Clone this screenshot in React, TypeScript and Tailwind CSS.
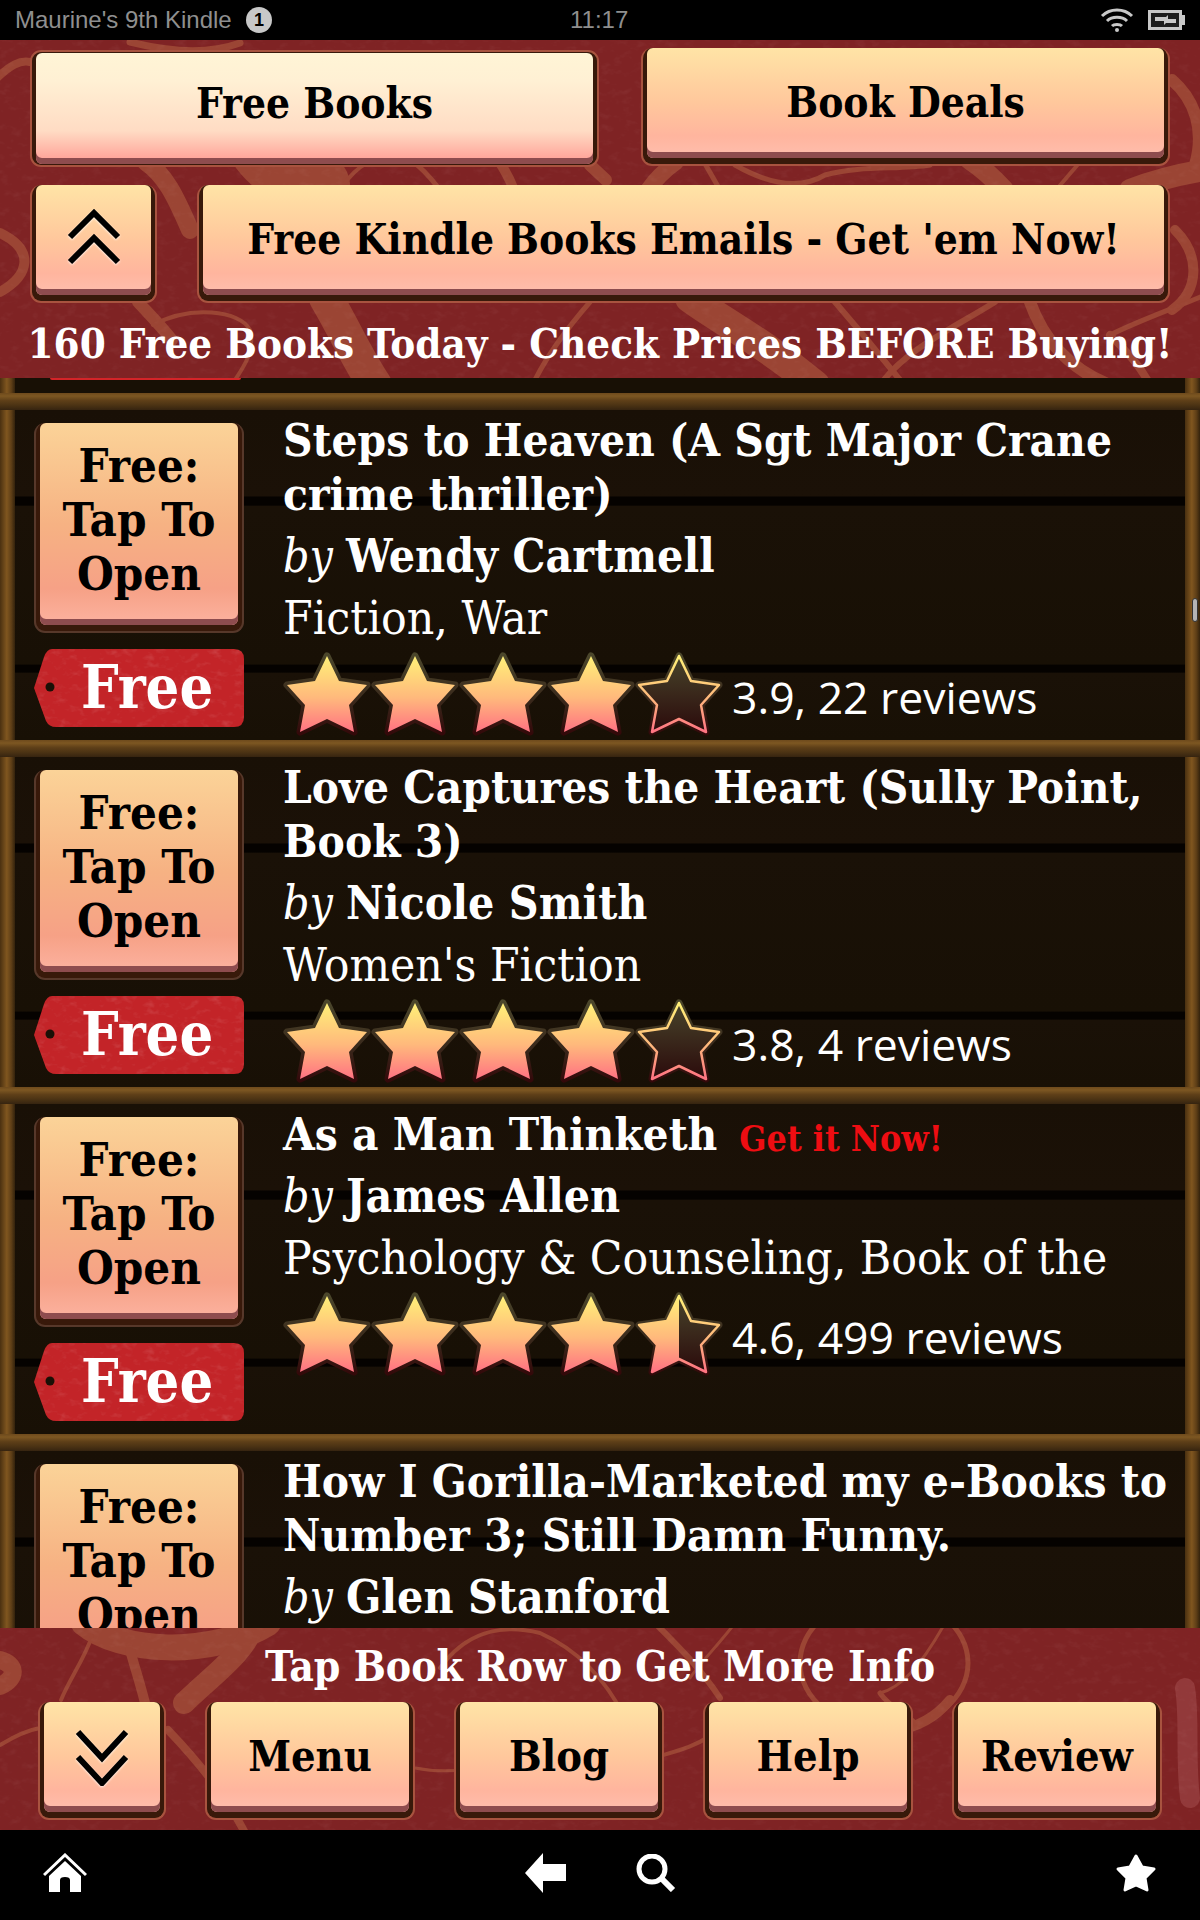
import type { ReactNode } from "react";

type Book = {
  title: string[];
  hot?: boolean;
  author: string;
  genre?: string;
  stars?: number[];
  rating?: string;
};

const books: Book[] = [
  { title: ["Steps to Heaven (A Sgt Major Crane", "crime thriller)"], author: "Wendy Cartmell", genre: "Fiction, War", stars: [1, 1, 1, 1, 0], rating: "3.9, 22 reviews" },
  { title: ["Love Captures the Heart (Sully Point,", "Book 3)"], author: "Nicole Smith", genre: "Women's Fiction", stars: [1, 1, 1, 1, 0], rating: "3.8, 4 reviews" },
  { title: ["As a Man Thinketh"], hot: true, author: "James Allen", genre: "Psychology & Counseling, Book of the", stars: [1, 1, 1, 1, 0.5], rating: "4.6, 499 reviews" },
  { title: ["How I Gorilla-Marketed my e-Books to", "Number 3; Still Damn Funny."], author: "Glen Stanford" },
];

const STAR = "44,4 56,29 84,33 66,53 71,80 44,67 17,80 22,53 4,33 32,29";

const Defs = () => (
  <svg width="0" height="0" className="absolute">
    <defs>
      <linearGradient id="starFill" gradientUnits="userSpaceOnUse" x1="0" y1="6" x2="0" y2="78">
        <stop offset="0" stopColor="#ffee78" />
        <stop offset="0.55" stopColor="#ffb97c" />
        <stop offset="1" stopColor="#ff7682" />
      </linearGradient>
      <linearGradient id="starEdge" gradientUnits="userSpaceOnUse" x1="0" y1="0" x2="0" y2="84">
        <stop offset="0" stopColor="#4c482c" />
        <stop offset="0.55" stopColor="#3a2a1c" />
        <stop offset="1" stopColor="#330709" />
      </linearGradient>
      <linearGradient id="starEmpty" gradientUnits="userSpaceOnUse" x1="0" y1="6" x2="0" y2="78">
        <stop offset="0" stopColor="#47432a" />
        <stop offset="1" stopColor="#2c0c0c" />
      </linearGradient>
      <clipPath id="starLeft">
        <rect x="0" y="0" width="44" height="83" />
      </clipPath>
      <filter id="grain" x="0" y="0" width="100%" height="100%">
        <feTurbulence type="fractalNoise" baseFrequency="0.09 0.14" numOctaves="3" seed="7" />
        <feColorMatrix values="0 0 0 0 1  0 0 0 0 0.8  0 0 0 0 0.8  1.6 0 0 0 -0.82" />
      </filter>
    </defs>
  </svg>
);

const Star = ({ value }: { value: number }) => (
  <svg width="88" height="84" viewBox="0 0 88 84" className="shrink-0">
    <polygon points={STAR} fill="url(#starEdge)" stroke="url(#starEdge)" strokeWidth="7" strokeLinejoin="round" />
    {value === 1 ? (
      <polygon points={STAR} fill="url(#starFill)" />
    ) : (
      <>
        <polygon points={STAR} fill="url(#starEmpty)" stroke="url(#starFill)" strokeWidth="2.5" strokeLinejoin="round" />
        {value > 0 && <polygon points={STAR} fill="url(#starFill)" clipPath="url(#starLeft)" />}
      </>
    )}
  </svg>
);

// header swirl coords are page y minus 40
const Swirls = ({ variant }: { variant: "top" | "bottom" }) => (
  <svg className="absolute inset-0 h-full w-full" fill="none" stroke="#9b4534" strokeLinecap="round">
    {variant === "top" ? (
      <>
        <path d="M-5 40C10 25 20 20 30 22" strokeWidth="8" />
        <path d="M0 193C35 210 30 235 0 252" strokeWidth="10" />
        <path d="M146 122C165 135 175 155 190 190" strokeWidth="18" />
        <path d="M260 110C275 130 290 135 320 145" strokeWidth="60" />
        <path d="M344 145C350 135 358 128 368 122" strokeWidth="4" />
        <path d="M413 122C425 130 432 140 440 150" strokeWidth="5" />
        <path d="M498 120C505 130 510 140 514 150" strokeWidth="10" />
        <path d="M590 125L606 140" strokeWidth="12" />
        <path d="M676 122C665 130 655 140 648 150" strokeWidth="16" />
        <path d="M704 122L720 150" strokeWidth="5" />
        <path d="M735 125C770 145 800 150 825 135C860 125 900 130 930 125" strokeWidth="5" />
        <path d="M970 120C985 130 995 140 1004 150" strokeWidth="20" />
        <path d="M1080 122L1056 150" strokeWidth="4" />
        <path d="M1205 130C1175 135 1150 142 1130 150" strokeWidth="22" />
        <path d="M1175 190C1200 215 1200 250 1172 270" strokeWidth="10" />
        <path d="M1172 40C1195 60 1205 90 1195 125" strokeWidth="12" />
        <path d="M138 262C150 275 160 285 172 300" strokeWidth="12" />
        <path d="M153 285C190 265 240 270 250 290C255 310 245 325 235 340" strokeWidth="4" />
        <path d="M326 258C345 290 355 315 375 345" strokeWidth="34" />
        <path d="M590 262C570 285 550 310 535 340" strokeWidth="5" />
        <path d="M690 258C720 280 760 300 815 345" strokeWidth="30" />
        <path d="M835 262C855 285 880 315 900 340" strokeWidth="6" />
        <path d="M995 262C950 290 905 310 880 345" strokeWidth="6" />
        <path d="M1030 262C1040 290 1060 325 1110 345" strokeWidth="12" />
        <path d="M1110 295C1125 310 1140 325 1150 345" strokeWidth="8" />
        <path d="M1110 295C1140 280 1170 270 1205 255" strokeWidth="5" />
        <path d="M130 2C170 12 210 14 240 3" strokeWidth="7" />
      </>
    ) : (
      <>
        <path d="M84 -5C120 25 210 30 268 -5" strokeWidth="26" />
        <path d="M255 -5C245 25 215 45 184 75" strokeWidth="22" />
        <path d="M92 8C85 30 70 50 61 72" strokeWidth="4" />
        <path d="M0 32C16 36 18 50 0 58" strokeWidth="18" />
        <path d="M130 22C135 40 140 55 145 75" strokeWidth="10" />
        <path d="M0 117C15 108 28 102 40 100" strokeWidth="4" />
        <path d="M168 102C190 125 225 165 245 205" strokeWidth="8" />
        <path d="M415 140C440 145 470 142 490 138" strokeWidth="3" />
        <path d="M440 40C465 5 500 -5 540 5C585 25 610 60 625 90" strokeWidth="4" />
        <path d="M660 128C680 122 695 118 710 108" strokeWidth="4" />
        <path d="M655 -5C680 20 700 40 720 70" strokeWidth="6" />
        <path d="M735 -5C720 15 700 35 690 50" strokeWidth="3" />
        <ellipse cx="884" cy="35" rx="84" ry="66" strokeWidth="5" />
        <path d="M840 85C870 112 920 108 950 72" strokeWidth="10" />
        <path d="M880 65C900 60 920 40 945 -5" strokeWidth="3" />
        <path d="M880 65C890 80 905 85 915 95" strokeWidth="5" />
        <path d="M1185 60C1190 90 1185 130 1190 170" stroke="#a5504f" strokeWidth="20" opacity="0.5" />
      </>
    )}
    <rect x="0" y="0" width="100%" height="100%" stroke="none" filter="url(#grain)" opacity="0.08" />
  </svg>
);

type BtnProps = {
  children: ReactNode;
  size: string;
  pressed?: boolean;
  row?: boolean;
};

const Btn = ({ children, size, pressed, row }: BtnProps) => (
  <div
    className={`flex shrink-0 flex-col rounded-[11px] border-2 bg-[#38190a] px-[4px] ${size} ${
      pressed ? "border-[#a5573a] pt-[1px] pb-[1px]" : "border-t-0 pb-[6px]"
    } ${row ? "border-[#57382a]" : "border-[#a8533f]"}`}
  >
    <div
      className={`flex flex-1 items-center justify-center rounded-[6px] text-center font-bold text-black shadow-[inset_0_-6px_0_#8e4c4e] ${
        pressed
          ? "pb-[11px] bg-[linear-gradient(#fff5d6,#fff0d4_25%,#ffdcc4_70%,#ff9f96_98%)]"
          : row
            ? "pb-[9px] bg-[linear-gradient(#fbd398,#f6b283_50%,#f6a186_82%,#fcb2a0)]"
            : "pb-[2px] bg-[linear-gradient(#ffe4a6,#ffc79c_50%,#ffb59e_80%,#ffbeae)]"
      }`}
    >
      {children}
    </div>
  </div>
);

const Chevrons = ({ down }: { down?: boolean }) => (
  <svg width="58" height="60" viewBox="0 0 58 60" fill="none" stroke="#000" strokeWidth="6" className="drop-shadow-[0_1px_1px_rgba(255,255,255,0.8)]">
    {down ? (
      <path d="M5 6L29 32L53 6M5 31L29 57L53 31" />
    ) : (
      <path d="M5 28L29 4L53 28M5 53L29 29L53 53" />
    )}
  </svg>
);

const Post = () => (
  <div className="w-[15px] shrink-0 bg-[linear-gradient(90deg,#4a3010,#80561f_45%,#5f3f17_75%,#33220c)]" />
);

const Shelf = () => (
  <div className="h-[17px] bg-[linear-gradient(#6e4a1c,#7d5722_18%,#5e3f18_45%,#4d3414_70%,#362410)]" />
);

const Tag = () => (
  <div className="relative mt-[16px] flex h-[78px] w-[210px] items-center pb-[2px] pl-[47px]">
    <svg className="absolute inset-0" width="210" height="78" viewBox="0 0 210 78">
      <defs>
        <clipPath id="tagShape">
          <path d="M18 0H200Q210 0 210 10V68Q210 78 200 78H22Q15 78 12 72L0 39L10 8Q13 0 18 0Z" />
        </clipPath>
      </defs>
      <g clipPath="url(#tagShape)">
        <rect width="210" height="78" fill="#c32428" />
        <rect width="210" height="78" filter="url(#grain)" opacity="0.2" />
      </g>
      <circle cx="16" cy="38" r="4.5" fill="#1a1006" />
    </svg>
    <span className="relative text-[59px] leading-none font-bold text-white">Free</span>
  </div>
);

const BookRow = ({ book }: { book: Book }) => (
  <div className="flex h-[330px] overflow-hidden">
    <Post />
    <div className="flex flex-1 bg-[linear-gradient(#191006,#1b1107_26%,#050200_26.4%,#050200_28.8%,#1a1107_29.2%,#181005_77%,#050200_77.3%,#050200_79.4%,#1a1107_79.8%,#181005)]">
      <div className="ml-[19px] w-[210px] shrink-0 pt-[13px]">
        <Btn row size="h-[210px] w-[210px] text-[47px] leading-[54px]">
          <span>
            Free:
            <br />
            Tap To
            <br />
            Open
          </span>
        </Btn>
        <Tag />
      </div>
      <div className="ml-[39px] min-w-0 flex-1 pt-[3px] whitespace-nowrap text-white">
        {book.title.map((line) => (
          <div key={line} className="text-[45.5px] leading-[54px] font-bold">
            {line}
            {book.hot && <span className="ml-[22px] align-[-1px] text-[35.5px] leading-none text-[#ee0d12]">Get it Now!</span>}
          </div>
        ))}
        <div className="mt-[4px] text-[46px] leading-[62px]">
          <span className="italic">by</span> <span className="font-bold">{book.author}</span>
        </div>
        {book.genre && <div className="text-[47.5px] leading-[62px]">{book.genre}</div>}
        {book.stars && (
          <div className="mt-[3px] flex items-center">
            <div className="flex">
              {book.stars.map((s, i) => (
                <Star key={i} value={s} />
              ))}
            </div>
            <span className="ml-[9px] pt-[5px] font-['Open_Sans',sans-serif] text-[44.5px] leading-[60px] [font-stretch:100%]">{book.rating}</span>
          </div>
        )}
      </div>
    </div>
    <Post />
  </div>
);

const Wifi = () => (
  <svg width="34" height="24" viewBox="0 0 34 24" fill="none" stroke="#c8c8c8" strokeWidth="3">
    <path d="M2 8C10 0 24 0 32 8M7 13C12 8 22 8 27 13M12 18C14 16 20 16 22 18" />
    <circle cx="17" cy="22" r="2" fill="#c8c8c8" stroke="none" />
  </svg>
);

const Battery = () => (
  <svg width="38" height="20" viewBox="0 0 38 20">
    <rect x="1.5" y="1.5" width="31" height="17" fill="#1d1d1d" stroke="#c8c8c8" strokeWidth="3" />
    <rect x="34" y="5" width="3" height="10" fill="#c8c8c8" />
    <path d="M7 7H18L20 5V9H28V13H18L16 15V11H7Z" fill="#c8c8c8" />
  </svg>
);

const NavIcons = () => (
  <div className="flex h-[90px] items-center bg-black pb-[4px]">
    <svg width="44" height="40" viewBox="0 0 44 40" className="ml-[43px]">
      <path d="M1 22L22 2L43 22" fill="none" stroke="#fff" strokeWidth="3" />
      <path d="M6 39V23L22 8L38 23V39H27V27Q27 24 22 24Q17 24 17 27V39Z" fill="#fff" />
    </svg>
    <svg width="42" height="40" viewBox="0 0 42 40" className="ml-[438px]">
      <path d="M0 20L18 0V11H41V28H18V40Z" fill="#fff" />
    </svg>
    <svg width="40" height="38" viewBox="0 0 40 38" fill="none" stroke="#fff" className="ml-[69px]">
      <circle cx="16" cy="15" r="13" strokeWidth="5" />
      <path d="M26 25L37 36" strokeWidth="6" />
    </svg>
    <svg width="42" height="40" viewBox="0 0 42 40" className="ml-[439px]">
      <polygon points="21,3 27,14 39,16 30,25 32,37 21,32 10,37 12,25 3,16 15,14" fill="#fff" stroke="#fff" strokeWidth="3" strokeLinejoin="round" />
    </svg>
  </div>
);

export default function App() {
  return (
    <div className="relative flex h-[1920px] w-[1200px] flex-col overflow-hidden bg-black font-['DejaVu_Serif',serif] font-stretch-condensed">
      <Defs />
      <div className="flex h-[40px] shrink-0 items-center bg-black font-['Liberation_Sans',sans-serif] text-[24px] text-[#8f8f8f] [font-stretch:100%]">
        <span className="ml-[15px] w-[217px] whitespace-nowrap">Maurine's 9th Kindle</span>
        <span className="ml-[14px] flex h-[26px] w-[26px] items-center justify-center rounded-full bg-[#c8c8c8] text-[18px] font-bold text-black">1</span>
        <span className="ml-[298px] w-[60px]">11:17</span>
        <div className="ml-[470px] flex items-center gap-[14px]">
          <Wifi />
          <Battery />
        </div>
      </div>

      <div className="relative z-10 h-[338px] shrink-0 overflow-hidden bg-[#7f2324] pt-[8px] pl-[30px]">
        <Swirls variant="top" />
        <div className="relative flex gap-[42px] text-[42px]">
          <div className="pt-[2px]">
            <Btn pressed size="h-[117px] w-[569px]">Free Books</Btn>
          </div>
          <Btn size="h-[118px] w-[529px]">Book Deals</Btn>
        </div>
        <div className="relative mt-[18px] flex gap-[40px] text-[42px]">
          <Btn size="h-[118px] w-[127px]">
            <Chevrons />
          </Btn>
          <Btn size="h-[118px] w-[973px]">Free Kindle Books Emails - Get 'em Now!</Btn>
        </div>
        <div className="relative mt-[14px] -ml-[30px] text-center text-[41.7px] leading-[54px] font-bold whitespace-nowrap text-white">
          160 Free Books Today - Check Prices BEFORE Buying!
        </div>
      </div>

      <div className="h-[1250px] shrink-0 overflow-hidden">
        <div className="flex h-[15px]">
          <Post />
          <div className="flex-1 bg-[#181005]">
            <div className="ml-[35px] h-[2px] w-[191px] rounded-b bg-[#d42428]" />
          </div>
          <Post />
        </div>
        {books.map((b) => (
          <div key={b.author}>
            <Shelf />
            <BookRow book={b} />
          </div>
        ))}
      </div>

      <div className="relative h-[202px] shrink-0 overflow-hidden bg-[#7f2324]">
        <Swirls variant="bottom" />
        <div className="relative h-[74px] text-center text-[42.3px] leading-[76px] font-bold text-white">Tap Book Row to Get More Info</div>
        <div className="relative flex gap-[39px] pl-[38px] text-[43px]">
          <Btn size="h-[118px] w-[128px]">
            <Chevrons down />
          </Btn>
          <Btn size="h-[118px] w-[210px]">Menu</Btn>
          <Btn size="h-[118px] w-[210px]">Blog</Btn>
          <Btn size="h-[118px] w-[210px]">Help</Btn>
          <Btn size="h-[118px] w-[210px]">Review</Btn>
        </div>
      </div>

      <NavIcons />

      <div className="absolute top-[598px] right-[2px] h-[24px] w-[6px] rounded-full border border-[#333] bg-[#b5b5b5]" />
    </div>
  );
}
